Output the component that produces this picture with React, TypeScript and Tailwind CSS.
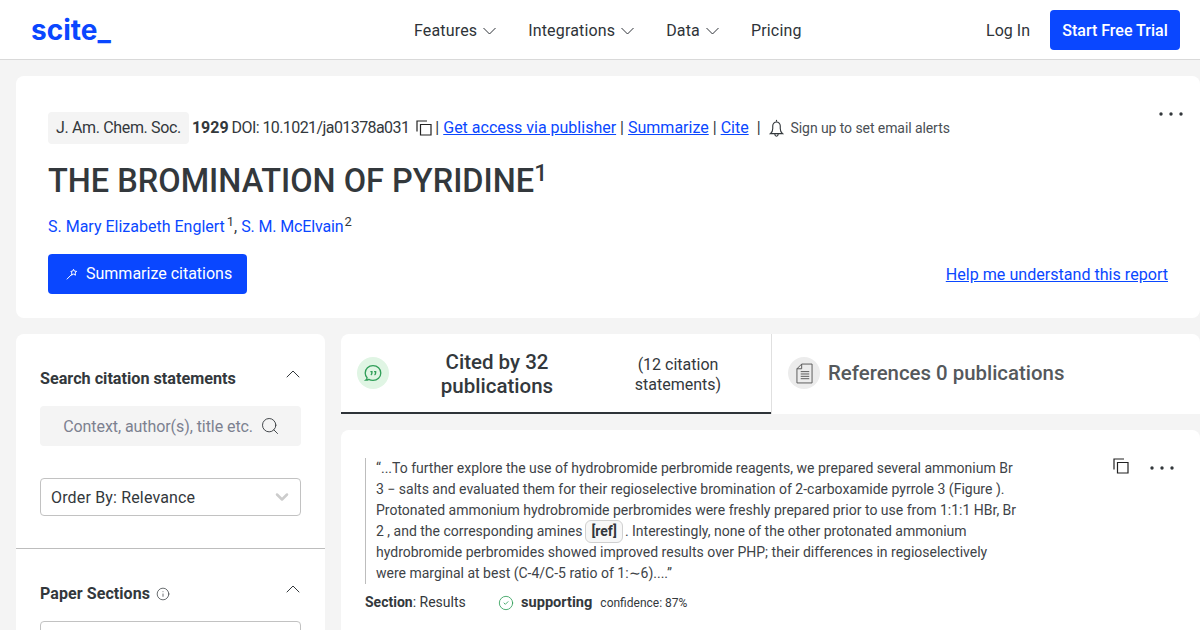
import { ChevronDown, ChevronUp, Info, Search, CircleCheck } from 'lucide-react';

const BLUE = 'text-[#0a47ff]';

const QUOTE_LINES = [
  '“...To further explore the use of hydrobromide perbromide reagents, we prepared several ammonium Br',
  '3 − salts and evaluated them for their regioselective bromination of 2-carboxamide pyrrole 3 (Figure ).',
  'Protonated ammonium hydrobromide perbromides were freshly prepared prior to use from 1:1:1 HBr, Br',
];

const QUOTE_END = [
  'hydrobromide perbromides showed improved results over PHP; their differences in regioselectively',
  'were marginal at best (C-4/C-5 ratio of 1:∼6)....”',
];

function NavItem({ label, menu }: { label: string; menu?: boolean }) {
  return (
    <a className="flex items-center gap-[6px] text-[16px] text-[#2e3338]">
      <span className="tracking-[0.01em]">{label}</span>
      {menu && (
        <svg viewBox="0 0 13 8" width="13" height="8" fill="none" stroke="currentColor" strokeWidth="1">
          <path d="M.5 1l6 6 6-6" />
        </svg>
      )}
    </a>
  );
}

function CopyIcon({ className }: { className?: string }) {
  return (
    <svg viewBox="0 0 16 16" width="16" height="16" fill="none" stroke="#222" strokeWidth="1.2" className={className}>
      <path d="M11 1H1v10.500" />
      <path d="M4.500 4.500H15V15H4.500z" />
    </svg>
  );
}

function Dots({ className }: { className?: string }) {
  return (
    <svg viewBox="0 0 26 6" width="26" height="6" fill="#33383c" className={className}>
      <circle cx="3" cy="3" r="1.700" />
      <circle cx="13" cy="3" r="1.700" />
      <circle cx="23" cy="3" r="1.700" />
    </svg>
  );
}

function BellIcon() {
  return (
    <svg viewBox="0 0 16 20" width="15" height="19" fill="none" stroke="#33383c" strokeWidth="1.200" className="ml-[8px]">
      <path d="M8 .800v1.800" />
      <path d="M1.500 15.500h13c-1.500-1-2.500-3-2.500-5.500V7a4 4 0 0 0-8 0v3c0 2.500-1 4.500-2.500 5.500z" />
      <path d="M6.300 15.500v1a1.700 1.700 0 0 0 3.400 0v-1" />
    </svg>
  );
}

function WandIcon() {
  return (
    <svg viewBox="0 0 12 12" width="12" height="12" fill="none" stroke="white" strokeWidth="1">
      <path d="M.8 11.300l4.800-4.800" />
      <path d="M7.500 1.300l.9 1.800 2.300.3-1.600 1.500.4 2.300-2-1.100-2 1.100.4-2.300L4.900 3.400l1.800-.3z" />
    </svg>
  );
}

function QuoteIcon() {
  return (
    <svg viewBox="0 0 20 20" width="20" height="20" fill="none" stroke="#2f9e58" strokeWidth="1.300">
      <path d="M2.600 17.200c1.300.1 2.300-.2 3.200-.8 1.200.7 2.700 1 4.200 1 4.400 0 7.800-3.300 7.800-7.400S14.400 2.600 10 2.600 2.200 5.900 2.200 10c0 1.900.7 3.500 1.900 4.800-.2 1-.7 1.800-1.500 2.400z" />
      <path d="M7.400 8.600h1.500v1.400c0 .9-.4 1.500-1.100 1.800M11.100 8.600h1.500v1.400c0 .9-.4 1.500-1.100 1.800" strokeWidth="1.400" />
    </svg>
  );
}

function DocIcon() {
  return (
    <svg viewBox="0 0 18 22" width="17" height="21" fill="none" stroke="#555" strokeWidth="1">
      <path d="M6 1h11v20H1V6z" />
      <path d="M6 1v5H1M5 9h9M5 11.500h9M5 14h9M5 16.500h9" />
    </svg>
  );
}

export default function App() {
  return (
    <div className="h-[630px] w-[1200px] overflow-hidden bg-[#f4f4f4] font-['Roboto',sans-serif] text-[#33383c]">
      <header className="flex h-[60px] items-center border-b border-[#d9d9d9] bg-white pl-[32px] pr-[20px]">
        <div className={`-ml-[1px] w-[383px] font-['Inter',sans-serif] text-[28px] leading-none font-bold ${BLUE}`}>scite_</div>
        <nav className="mt-[2px] flex items-center gap-[32px]">
          <NavItem label="Features" menu />
          <NavItem label="Integrations" menu />
          <NavItem label="Data" menu />
          <NavItem label="Pricing" />
        </nav>
        <div className="ml-auto flex items-center gap-[20px]">
          <a className="mt-[2px] text-[16px] text-[#2e3338]">Log In</a>
          <button className="h-[40px] w-[130px] rounded bg-[#0a47ff] pt-[2px] text-[16px] font-medium text-white">Start Free Trial</button>
        </div>
      </header>

      <div className="flex flex-col gap-[16px] pt-[16px] pl-[16px]">
        <section className="relative h-[242px] rounded-lg bg-white px-[32px] pt-[36px]">
          <div className="flex h-[32px] items-center whitespace-nowrap text-[16px]">
            <span className="flex h-[32px] items-center rounded bg-[#f4f4f4] px-[8px] tracking-[-0.35px]">J. Am. Chem. Soc.</span>
            <b className="ml-[3px] font-bold">1929</b>
            <span className="ml-[3px] tracking-[-0.58px]">DOI: 10.1021/ja01378a031</span>
            <CopyIcon className="ml-[7px]" />
            <span className="ml-[3px]">|</span>
            <a className={`ml-[4px] underline ${BLUE}`}>Get access via publisher</a>
            <span className="mx-[4px]">|</span>
            <a className={`underline ${BLUE}`}>Summarize</a>
            <span className="mx-[4px]">|</span>
            <a className={`underline ${BLUE}`}>Cite</a>
            <span className="ml-[8px]">|</span>
            <BellIcon />
            <span className="ml-[7px] text-[14px] tracking-[-0.08px] text-[#4a4f54]">Sign up to set email alerts</span>
          </div>
          <Dots className="absolute top-[35px] right-[16px]" />
          <h1 className="mt-[17px] text-[32.5px] leading-[40px] font-medium text-[#33383c]">
            THE BROMINATION OF PYRIDINE<sup className="text-[23px]">1</sup>
          </h1>
          <div className={`mt-[14px] text-[16px] leading-[24px] ${BLUE}`}>
            S. Mary Elizabeth Englert<sup className="ml-[2px] text-[13px] text-[#33383c]">1</sup>
            <span className="text-[#33383c]">, </span>
            <span className="tracking-[-0.15px]">S. M. McElvain</span>
            <sup className="ml-[1px] text-[13px] text-[#33383c]">2</sup>
          </div>
          <div className="mt-[15px] flex items-center justify-between">
            <button className="flex h-[40px] w-[199px] items-center gap-[8px] rounded bg-[#0a47ff] pl-[18px] text-[16px] text-white">
              <WandIcon />
              Summarize citations
            </button>
            <a className={`mt-[2px] text-[16.1px] underline ${BLUE}`}>Help me understand this report</a>
          </div>
        </section>

        <div className="flex gap-[16px]">
          <aside className="h-[400px] w-[309px] shrink-0 rounded-lg bg-white">
            <div className="flex h-[215px] flex-col border-b border-[#bdbdbd] px-[24px] pt-[33px]">
              <div className="flex items-center justify-between">
                <h3 className="text-[16.2px] leading-[24px] font-bold">Search citation statements</h3>
                <ChevronUp size={24} strokeWidth={1} className="-mt-[11px] -mr-[4px]" />
              </div>
              <div className="mt-[15px] flex h-[40px] items-center justify-end gap-[7px] rounded bg-[#f4f4f4] pr-[21px] text-[16px] text-[#7c8190]">
                <span className="mt-[2px] tracking-[-0.07px]">Context, author(s), title etc.</span>
                <Search size={20} strokeWidth={1.1} className="text-[#33383c]" />
              </div>
              <div className="mt-[32px] flex h-[38px] items-center justify-between rounded border border-[#c2c2c2] pr-[8px] pl-[10px] text-[16px]">
                <span className="mt-[2px] tracking-[0.16px]">Order By: Relevance</span>
                <ChevronDown size={20} strokeWidth={3} className="text-[#cccccc]" />
              </div>
            </div>
            <div className="px-[24px] pt-[33px]">
              <div className="flex items-center justify-between">
                <h3 className="flex items-center gap-[6px] text-[16px] leading-[24px] font-bold">
                  <span className="tracking-[0.08px]">Paper Sections</span>
                  <Info size={14} strokeWidth={1.25} />
                </h3>
                <ChevronUp size={24} strokeWidth={1} className="-mt-[11px] -mr-[4px]" />
              </div>
              <div className="mt-[15px] h-[38px] rounded border border-[#c2c2c2]" />
            </div>
          </aside>

          <main className="min-w-0 flex-1">
            <div className="flex h-[80px]">
              <div className="flex w-[430px] items-center rounded-tl-lg border-b-2 border-[#2e3338] bg-white pl-[16px]">
                <span className="flex h-[32px] w-[32px] items-center justify-center rounded-full bg-[#e0f5e4]">
                  <QuoteIcon />
                </span>
                <div className="mt-[2px] ml-[43px] w-[130px] text-center text-[20.5px] leading-[24px] font-medium">Cited by 32 publications</div>
                <div className="mt-[4px] ml-[56px] w-[120px] text-center text-[16px] leading-[20px]">(12 citation statements)</div>
              </div>
              <div className="flex flex-1 items-center rounded-tr-lg border-l border-[#e0e0e0] bg-white pb-[2px] pl-[16px]">
                <span className="flex h-[32px] w-[32px] items-center justify-center rounded-full bg-[#ececec]">
                  <DocIcon />
                </span>
                <span className="ml-[8px] text-[20.4px] font-medium text-[#55595c]">References 0 publications</span>
              </div>
            </div>
            <article className="relative mt-[16px] h-[300px] rounded-lg bg-white pt-[28px] pl-[24px]">
              <div className="absolute top-[28px] right-[25px] flex items-center gap-[20px]">
                <CopyIcon />
                <Dots className="mt-[4px]" />
              </div>
              <div className="w-[660px] whitespace-nowrap border-l border-[#bdbdbd] pl-[10px] text-[14px] leading-[21px] text-[#3e4347]">
                {QUOTE_LINES.map((line) => (
                  <div key={line}>{line}</div>
                ))}
                <div className="flex items-center">
                  2 , and the corresponding amines
                  <span className="mr-[2px] ml-[3px] -my-[1px] flex h-[23px] items-center rounded-md border border-[#d0d0d0] bg-[#f7f7f7] px-[5px] font-bold text-[#33383c]">[ref]</span>
                  . Interestingly, none of the other protonated ammonium
                </div>
                {QUOTE_END.map((line) => (
                  <div key={line}>{line}</div>
                ))}
              </div>
              <div className="mt-[8px] flex items-center text-[14px]">
                <span className="w-[133px]"><b className="font-bold">Section</b>: Results</span>
                <CircleCheck size={16} strokeWidth={1.25} className="text-[#2f9e58]" />
                <b className="ml-[7px] text-[14.6px] font-bold">supporting</b>
                <span className="ml-[8px] text-[12px]">confidence: 87%</span>
              </div>
            </article>
          </main>
        </div>
      </div>
    </div>
  );
}
